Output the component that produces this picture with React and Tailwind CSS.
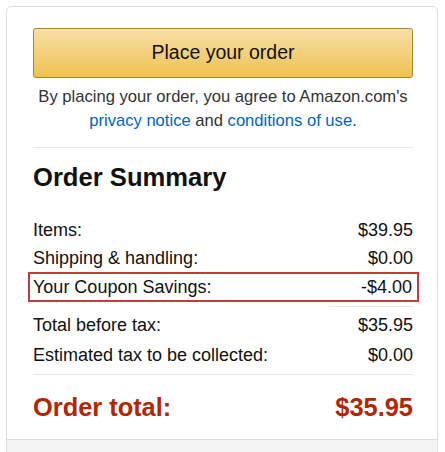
import React from 'react';

const Row = ({ label, value, className = '' }) => (
  <div className={`flex justify-between ${className}`}>
    <span>{label}</span>
    <span>{value}</span>
  </div>
);

const App = () => {
  return (
    <div className="w-[445px] h-[452px] bg-white pt-[6px] pl-[6px] pr-[7px] overflow-hidden text-[#111] font-['Liberation_Sans',Arial,sans-serif]">
      <div className="border border-[#dddddd] rounded-[5px] overflow-hidden">
        <div className="pl-[26px] pr-[24px] pt-[21px] pb-[16px]">
          <button
            type="button"
            className="w-full h-[50px] rounded-[3px] border border-[#a88734] bg-gradient-to-b from-[#f7dfa5] to-[#f0c14b] text-[19.5px] text-[#111]"
          >
            Place your order
          </button>

          <p className="mt-[7px] text-center text-[16.6px] leading-[24px] text-[#333]">
            By placing your order, you agree to Amazon.com's
            <br />
            <a className="text-[#0066c0]">privacy notice</a> and{' '}
            <a className="text-[#0066c0]">conditions of use</a>.
          </p>

          <div className="mt-[14px] h-px bg-[#e7e7e7]" />

          <h1 className="mt-[13px] text-[25.6px] leading-[32px] font-bold text-[#111]">Order Summary</h1>

          <div className="mt-[23px] text-[18px] leading-[28px]">
            <Row label="Items:" value="$39.95" />
            <Row label="Shipping & handling:" value="$0.00" />
            <div className="-ml-[5px] -mr-[6px] border-2 border-[#c63a3c] pl-[3px] pr-[5px] leading-[26px] flex justify-between">
              <span>Your Coupon Savings:</span>
              <span>-$4.00</span>
            </div>
            <div className="flex justify-end mt-[4px]">
              <div className="w-[84px] h-px bg-[#e7e7e7]" />
            </div>
            <div className="mt-[3px] leading-[30px]">
              <Row label="Total before tax:" value="$35.95" />
              <Row label="Estimated tax to be collected:" value="$0.00" />
            </div>
          </div>

          <div className="mt-[4px] h-px bg-[#e7e7e7]" />

          <div className="mt-[16px] flex justify-between text-[25.4px] leading-[32px] font-bold text-[#b12704]">
            <span>Order total:</span>
            <span>$35.95</span>
          </div>
        </div>
        <div className="h-[30px] border-t border-[#dddddd] bg-[#f3f3f3]" />
      </div>
    </div>
  );
};

export default App;
